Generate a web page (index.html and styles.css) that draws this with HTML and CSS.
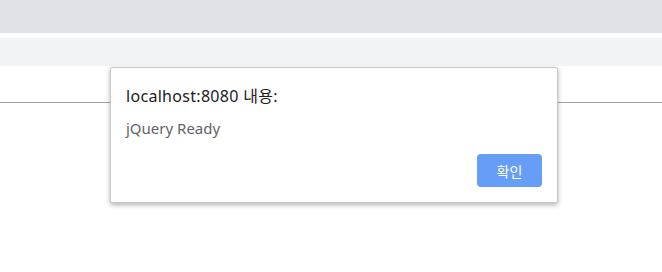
FILE: index.html
```html
<!DOCTYPE html>
<html lang="ko">
<head>
<meta charset="utf-8">
<link rel="stylesheet" href="styles.css">
</head>
<body>
<div class="tabbar"></div>
<div class="gap"></div>
<div class="toolbar"></div>
<div class="page">
  <div class="rule"></div>
</div>
<div class="dialog">
  <div class="title">localhost:8080 내용:</div>
  <div class="message">jQuery Ready</div>
  <div class="actions"><button class="ok">확인</button></div>
</div>
</body>
</html>
```
FILE: styles.css
```css
html, body {
  margin: 0;
  padding: 0;
  background: #ffffff;
  font-family: "Noto Sans", "Noto Sans CJK KR", sans-serif;
}
.tabbar {
  height: 33px;
  background: #dee1e6;
}
.gap {
  height: 5px;
  background: #ffffff;
}
.toolbar {
  height: 28px;
  background: #f1f3f4;
}
.page {
  padding-top: 36px;
}
.rule {
  height: 1px;
  background: #a0a0a0;
}
.dialog {
  position: absolute;
  left: 110px;
  top: 67px;
  width: 448px;
  height: 136px;
  box-sizing: border-box;
  background: #ffffff;
  border: 1px solid #c8c8c8;
  border-radius: 2px;
  box-shadow: 0 2px 5px rgba(0, 0, 0, 0.3);
  padding: 17px 15px 15px 15px;
  display: flex;
  flex-direction: column;
}
.title {
  font-size: 16px;
  line-height: 22px;
  letter-spacing: 0.3px;
  color: #202124;
}
.message {
  margin-top: 11px;
  font-size: 15px;
  line-height: 20px;
  color: #5f6368;
}
.actions {
  margin-top: auto;
  display: flex;
  justify-content: flex-end;
}
.ok {
  width: 65px;
  height: 33px;
  border: none;
  border-radius: 4px;
  background: #669df6;
  color: #ffffff;
  font-family: "Noto Sans CJK KR", sans-serif;
  font-size: 14px;
  padding: 0;
}
```
